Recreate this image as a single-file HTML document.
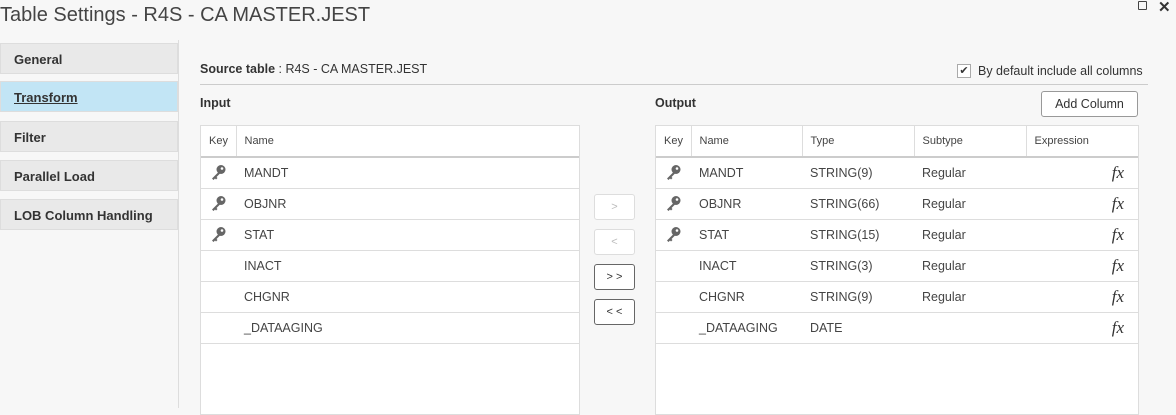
<!DOCTYPE html>
<html><head><style>
*{box-sizing:border-box;margin:0;padding:0}
body{width:1176px;height:408px;overflow:hidden;background:#f7f7f7;font-family:"Liberation Sans",sans-serif;color:#333;position:relative}
.a{position:absolute}
.title{left:0;top:4px;font-size:20px;color:#444}
.side{left:0;top:40px;width:179px;height:368px;border-right:1px solid #ddd}
.tab{position:absolute;left:0;width:178px;height:31px;background:#e9e9e9;border:1px solid #ddd;font-size:13px;font-weight:bold;padding:8px 13px;color:#333}
.tab.on{background:#c2e5f5;font-weight:normal;text-decoration:underline}
table{border-collapse:collapse;background:#fff;font-size:12.5px;table-layout:fixed}
td,th{height:31px;border-bottom:1px solid #ddd;text-align:left;font-weight:normal;padding-left:8px;color:#444}
th{font-size:11px;border-right:1px solid #ddd;border-bottom:2px solid #ccc}
th:last-child{border-right:none}
.tb{border:1px solid #ddd;background:#fff;overflow:hidden}
.btn{position:absolute;left:594px;width:41px;height:26px;border:1px solid #666;border-radius:3px;background:#fff;font-size:11px;text-align:center;line-height:24px}
.btn.d{border-color:#ddd;color:#bbb}
.fx{font-family:"Liberation Serif",serif;font-style:italic;font-size:17px;text-align:right;padding-right:14px;color:#333}
td svg{display:block;margin-left:1px}
</style></head><body>
<svg width="0" height="0" style="position:absolute"><defs><g id="k"><circle cx="11" cy="5.5" r="4.5" fill="#666"/><path d="M8.5 8 L2 14.5 L3.5 16 L5 14.5 L6 15.5 L7.5 14 L6.5 13 L10 9.5Z" fill="#666"/><circle cx="12" cy="4.5" r="1.3" fill="#fff"/></g></defs></svg>
<div class="a title">Table Settings - R4S - CA MASTER.JEST</div>
<div class="a" style="left:1138px;top:1px;width:9px;height:9px;border:1.5px solid #444;border-radius:1px"></div>
<div class="a" style="left:1158px;top:-2px;font-size:15px;font-weight:bold;color:#333">✕</div>
<div class="a side"></div>
<div class="tab" style="top:43px">General</div>
<div class="tab on" style="top:81px"><b>Transform</b></div>
<div class="tab" style="top:121px">Filter</div>
<div class="tab" style="top:160px">Parallel Load</div>
<div class="tab" style="top:199px">LOB Column Handling</div>
<div class="a" style="left:200px;top:62px;font-size:12.5px"><b>Source table</b> : R4S - CA MASTER.JEST</div>
<div class="a" style="left:200px;top:84px;width:948px;height:1px;background:#ccc"></div>
<div class="a" style="left:957px;top:64px;width:14px;height:14px;border:1px solid #aaa;background:#fff;font-size:11px;text-align:center;line-height:12px">✔</div>
<div class="a" style="left:978px;top:64px;font-size:12.5px">By default include all columns</div>
<div class="a" style="left:200px;top:96px;font-size:12.5px;font-weight:bold">Input</div>
<div class="a" style="left:655px;top:96px;font-size:12.5px;font-weight:bold">Output</div>
<div class="a" style="left:1041px;top:91px;width:97px;height:26px;border:1px solid #999;border-radius:3px;background:#fff;font-size:12.5px;text-align:center;line-height:24px">Add Column</div>
<div class="a tb" style="left:200px;top:125px;width:380px;height:290px">
<table style="width:378px"><colgroup><col style="width:35px"><col></colgroup>
<tr><th>Key</th><th>Name</th></tr>
<tr><td><svg width="17" height="17"><use href="#k"/></svg></td><td>MANDT</td></tr><tr><td><svg width="17" height="17"><use href="#k"/></svg></td><td>OBJNR</td></tr><tr><td><svg width="17" height="17"><use href="#k"/></svg></td><td>STAT</td></tr>
<tr><td></td><td>INACT</td></tr><tr><td></td><td>CHGNR</td></tr><tr><td></td><td>_DATAAGING</td></tr>
</table></div>
<div class="btn d" style="top:194px">&gt;</div>
<div class="btn d" style="top:229px">&lt;</div>
<div class="btn" style="top:264px">&gt; &gt;</div>
<div class="btn" style="top:299px">&lt; &lt;</div>
<div class="a tb" style="left:655px;top:125px;width:484px;height:290px">
<table style="width:482px"><colgroup><col style="width:35px"><col style="width:111px"><col style="width:112px"><col style="width:112px"><col></colgroup>
<tr><th>Key</th><th>Name</th><th>Type</th><th>Subtype</th><th>Expression</th></tr>
<tr><td><svg width="17" height="17"><use href="#k"/></svg></td><td>MANDT</td><td>STRING(9)</td><td>Regular</td><td class="fx">fx</td></tr>
<tr><td><svg width="17" height="17"><use href="#k"/></svg></td><td>OBJNR</td><td>STRING(66)</td><td>Regular</td><td class="fx">fx</td></tr>
<tr><td><svg width="17" height="17"><use href="#k"/></svg></td><td>STAT</td><td>STRING(15)</td><td>Regular</td><td class="fx">fx</td></tr>
<tr><td></td><td>INACT</td><td>STRING(3)</td><td>Regular</td><td class="fx">fx</td></tr>
<tr><td></td><td>CHGNR</td><td>STRING(9)</td><td>Regular</td><td class="fx">fx</td></tr>
<tr><td></td><td>_DATAAGING</td><td>DATE</td><td></td><td class="fx">fx</td></tr>
</table></div>
</body></html>
